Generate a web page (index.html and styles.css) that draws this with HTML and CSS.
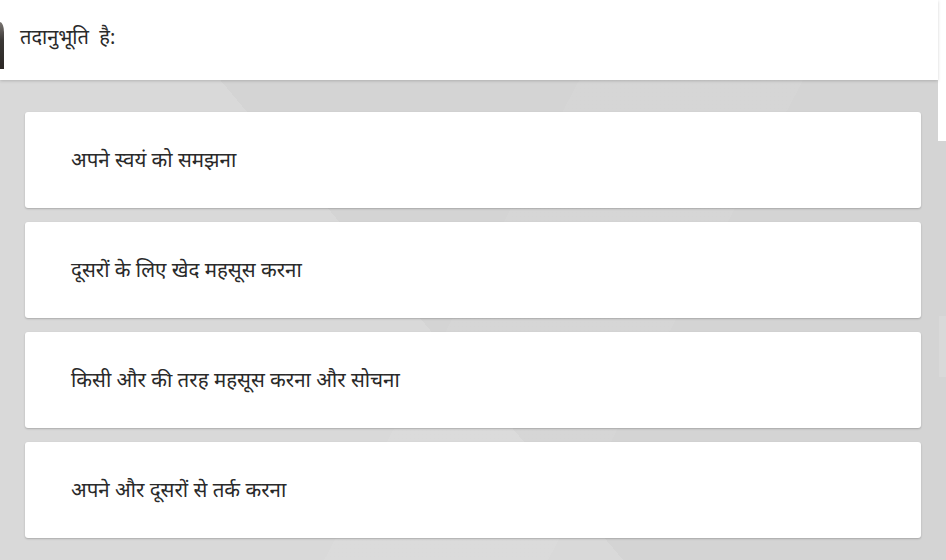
FILE: index.html
```html
<!DOCTYPE html>
<html lang="hi">
<head>
<meta charset="utf-8">
<title>तदानुभूति</title>
<link rel="stylesheet" href="styles.css">
</head>
<body>
<div class="page">
  <div class="main">
    <header class="question">
      <div class="avatar"></div>
      <div class="question-text">तदानुभूति&nbsp; है:</div>
    </header>
    <div class="options">
      <div class="option">अपने स्वयं को समझना</div>
      <div class="option">दूसरों के लिए खेद महसूस करना</div>
      <div class="option">किसी और की तरह महसूस करना और सोचना</div>
      <div class="option">अपने और दूसरों से तर्क करना</div>
    </div>
  </div>
  <div class="rail">
    <div class="rail-top"></div>
    <div class="rail-thumb"></div>
  </div>
</div>
</body>
</html>
```
FILE: styles.css
```css
html, body {
  margin: 0;
  padding: 0;
  height: 100%;
  overflow: hidden;
}
body {
  font-family: "Noto Sans", "Liberation Sans", sans-serif;
  color: #2a2a2a;
  background-color: #d9d9d9;
  background-image:
    linear-gradient(50deg, rgba(0,0,0,0) 0 44%, rgba(0,0,0,0.025) 44% 100%),
    linear-gradient(-62deg, rgba(0,0,0,0) 0 32%, rgba(255,255,255,0.05) 32% 50%, rgba(0,0,0,0) 50%);
}
.page {
  display: flex;
  height: 560px;
}
.main {
  width: 938px;
  display: flex;
  flex-direction: column;
}
.question {
  height: 80px;
  background: #fff;
  display: flex;
  align-items: center;
  box-shadow: 0 1px 3px rgba(0,0,0,0.18);
  position: relative;
  z-index: 1;
}
.avatar {
  width: 4px;
  height: 47px;
  margin-top: 10px;
  border-top-right-radius: 4px 10px;
  background: linear-gradient(180deg, #7a7572 0%, #3a3735 40%, #2b2724 100%);
}
.question-text {
  margin-left: 16px;
  margin-top: -8px;
  font-size: 20px;
}
.options {
  display: flex;
  flex-direction: column;
  gap: 14px;
  padding: 32px 17px 0 25px;
}
.option {
  height: 96px;
  background: #fff;
  border-radius: 3px;
  box-shadow: 0 1px 2px rgba(0,0,0,0.22);
  display: flex;
  align-items: center;
  padding-left: 46px;
  font-size: 20.5px;
  padding-bottom: 2px;
  box-sizing: border-box;
}
.rail {
  width: 8px;
  display: flex;
  flex-direction: column;
}
.rail-top {
  height: 141px;
  background: #fff;
}
.rail-thumb {
  margin-top: 175px;
  margin-left: 1px;
  height: 61px;
  background: rgba(255,255,255,0.12);
}
```
